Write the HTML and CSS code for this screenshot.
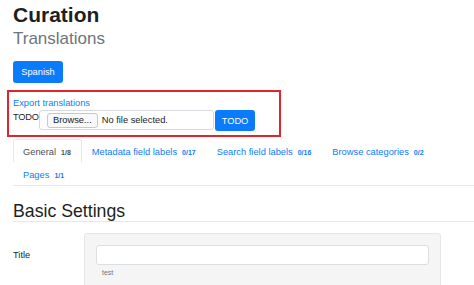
FILE: index.html
```html
<!DOCTYPE html>
<html>
<head>
<meta charset="utf-8">
<link rel="stylesheet" href="styles.css">
</head>
<body>
<div class="page">
  <h1 class="title">Curation</h1>
  <div class="subtitle">Translations</div>
  <div class="lang-row"><span class="btn btn-primary btn-lang">Spanish</span></div>

  <div class="highlight">
    <a class="export-link" href="#">Export translations</a>
    <div class="import-row">
      <span class="todo-label">TODO</span>
      <div class="file-box">
        <span class="browse-btn">Browse...</span>
        <span class="file-name">No file selected.</span>
      </div>
      <span class="btn btn-primary btn-todo">TODO</span>
    </div>
  </div>

  <ul class="tabs">
    <li class="tab active">General<span class="count">1/8</span></li>
    <li class="tab">Metadata field labels<span class="count">0/17</span></li>
    <li class="tab">Search field labels<span class="count">0/16</span></li>
    <li class="tab">Browse categories<span class="count">0/2</span></li>
    <li class="tab">Pages<span class="count">1/1</span></li>
  </ul>

  <h2 class="section-title">Basic Settings</h2>

  <div class="form-row">
    <label class="form-label">Title</label>
    <div class="well">
      <div class="text-input"></div>
      <div class="help">test</div>
    </div>
  </div>
</div>
</body>
</html>
```

FILE: styles.css
```css
html, body {
  margin: 0;
  padding: 0;
  background: #fff;
  overflow: hidden;
}
body {
  font-family: "Liberation Sans", Arial, sans-serif;
  font-size: 9.3px;
  color: #212529;
}
.page {
  padding-left: 13px;
}
.title {
  margin: 3px 0 0;
  font-size: 21px;
  line-height: 24px;
  font-weight: bold;
  color: #1d1f21;
}
.subtitle {
  margin-top: 2px;
  font-size: 17px;
  line-height: 20px;
  color: #6c757d;
}
.lang-row {
  margin-top: 12px;
  display: flex;
}
.btn {
  display: inline-flex;
  align-items: center;
  justify-content: center;
  border-radius: 3px;
  box-sizing: border-box;
}
.btn-primary {
  background: #0a7cfb;
  color: #fff;
}
.btn-lang {
  width: 50px;
  height: 22px;
}
.highlight {
  margin: 7px 0 0 -6px;
  width: 274px;
  box-sizing: border-box;
  border: 2px solid #e3242b;
  padding: 5px 4px 4px 4px;
}
.export-link {
  display: block;
  line-height: 12px;
  color: #0a7cfb;
  text-decoration: none;
}
.import-row {
  margin-top: 1px;
  display: flex;
  align-items: flex-start;
}
.todo-label {
  width: 26px;
  flex: none;
  line-height: 12px;
  margin-top: 1px;
  letter-spacing: -0.2px;
  white-space: nowrap;
}
.file-box {
  width: 175px;
  height: 20px;
  box-sizing: border-box;
  border: 1px solid #d6dade;
  border-radius: 3px;
  display: flex;
  align-items: center;
  padding-left: 7px;
}
.browse-btn {
  height: 13px;
  padding: 0 5px;
  display: inline-flex;
  align-items: center;
  border: 1px solid #c8c8c8;
  border-radius: 3px;
  background: #f9f9f9;
  color: #222;
}
.file-name {
  margin-left: 4px;
  color: #222;
}
.btn-todo {
  margin-left: 1px;
  width: 40px;
  height: 21px;
}
.tabs {
  list-style: none;
  margin: 2px 0 0;
  padding: 0;
  display: flex;
  flex-wrap: wrap;
  border-bottom: 1px solid #e6e9ec;
}
.tab {
  height: 23px;
  box-sizing: border-box;
  padding: 7px 10px 4px 9px;
  line-height: 11px;
  border: 1px solid transparent;
  border-bottom: none;
  color: #0a7cfb;
  white-space: nowrap;
}
.tab.active {
  color: #495057;
  border-color: #e6e9ec;
  border-radius: 3px 3px 0 0;
  background: #fff;
}
.count {
  margin-left: 5px;
  font-size: 7px;
  font-weight: bold;
}
.section-title {
  margin: 15px 0 0;
  font-size: 17.7px;
  line-height: 20px;
  font-weight: normal;
  color: #1d1f21;
  border-bottom: 1px solid #e6e9ec;
}
.form-row {
  margin-top: 11px;
  display: flex;
  align-items: flex-start;
}
.form-label {
  width: 71px;
  flex: none;
  margin-top: 12px;
  line-height: 20px;
}
.well {
  width: 357px;
  height: 60px;
  box-sizing: border-box;
  background: #f5f5f5;
  border: 1px solid #e6e6e6;
  border-radius: 3px;
  padding: 11px 11px 0;
}
.text-input {
  height: 20px;
  box-sizing: border-box;
  background: #fff;
  border: 1px solid #dcdfe2;
  border-radius: 3px;
}
.help {
  margin: 3px 0 0 6px;
  font-size: 7px;
  line-height: 10px;
  color: #6c757d;
}
```
